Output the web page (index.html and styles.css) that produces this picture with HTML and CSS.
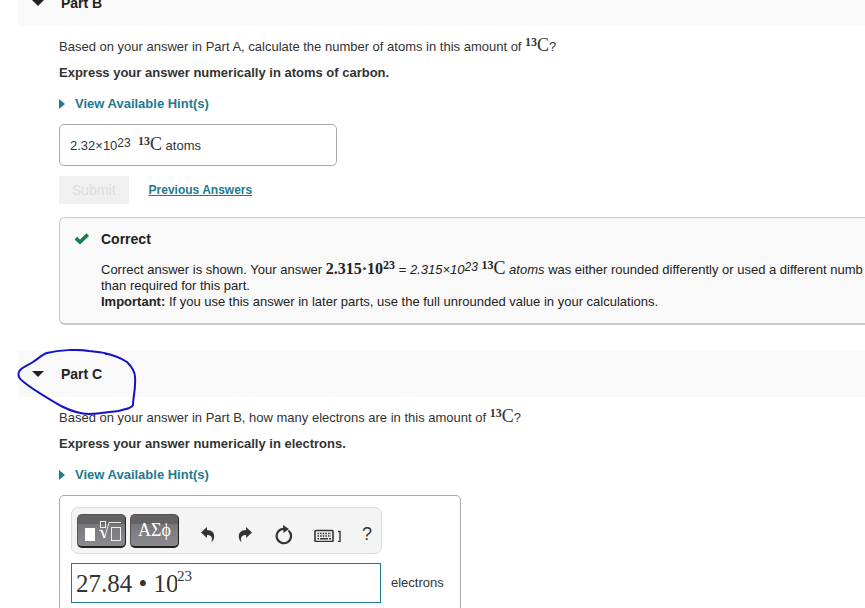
FILE: index.html
```html
<!DOCTYPE html>
<html lang="en">
<head>
    <meta charset="UTF-8">
    <title>Part C</title>
    <link rel="stylesheet" href="styles.css">
</head>
<body>
    <main class="assignment">

        <section class="part">
            <h2 class="part-header">
                <span class="arrow-down"></span>
                Part B
            </h2>
            <div class="part-body">
                <p>Based on your answer in Part A, calculate the number of atoms in this amount of <span class="math"><sup>13</sup>C</span>?</p>
                <p class="instructions">Express your answer numerically in atoms of carbon.</p>
                <a class="hints" href="#hintsB"><span class="arrow-right"></span>View Available Hint(s)</a>

                <div class="answer">2.32×10<sup>23</sup> &nbsp;<span class="math"><sup>13</sup>C</span> atoms</div>

                <div class="actions">
                    <button class="submit" type="button" disabled>Submit</button>
                    <a class="previous" href="#previous">Previous Answers</a>
                </div>

                <div class="feedback">
                    <svg class="check" width="16" height="14" viewBox="0 0 16 14">
                        <path d="M1.800 6.200 L6 10 L13.800 2.600" fill="none" stroke="#12824c" stroke-width="3.600"/>
                    </svg>
                    <div>
                        <h3>Correct</h3>
                        <p>Correct answer is shown. Your answer <span class="math strong">2.315·10<sup>23</sup></span> = <i>2.315×10<sup>23</sup></i> <span class="math"><sup>13</sup>C</span> <i>atoms</i> was either rounded differently or used a different numb<br>
                        than required for this part.<br>
                        <b>Important:</b> If you use this answer in later parts, use the full unrounded value in your calculations.</p>
                    </div>
                </div>
            </div>
        </section>

        <section class="part">
            <h2 class="part-header">
                <span class="arrow-down"></span>
                Part C
                <svg class="pen-circle" width="122" height="68" viewBox="0 0 122 68">
                    <path d="M89 5 C88 3 80 3 72 2 C60 0 42 1 30 4 C26 5 22 9 16 13 C10 17 3 19 2 23 C0 28 4 31 8 34 C18 42 32 50 44 57 C54 62 62 65 72 65 C82 65 92 63 101 62 C109 60 115 59 116 56 C116 48 119 40 118 28 C118 22 113 16 110 13 C104 9 96 6 87 4" fill="none" stroke="#1512c4" stroke-width="2" stroke-linecap="round" stroke-linejoin="round"/>
                </svg>
            </h2>
            <div class="part-body">
                <p>Based on your answer in Part B, how many electrons are in this amount of <span class="math"><sup>13</sup>C</span>?</p>
                <p class="instructions">Express your answer numerically in electrons.</p>
                <a class="hints" href="#hintsC"><span class="arrow-right"></span>View Available Hint(s)</a>

                <form class="editor">
                    <div class="toolbar">
                        <button class="palette" type="button" aria-label="Templates">
                            <svg width="40" height="26" viewBox="0 0 40 26">
                                <rect x="3" y="11" width="10" height="13" fill="#fff"/>
                                <g fill="none" stroke="#eee" stroke-width="1">
                                    <rect x="18.500" y="4.500" width="5" height="6"/>
                                    <path d="M17 14 L19.500 13 L22.500 21 L27 5.500 H39"/>
                                    <rect x="29.500" y="10.500" width="9" height="13"/>
                                </g>
                                <path d="M19.500 13 L22.500 21" stroke="#fff" stroke-width="2"/>
                            </svg>
                        </button>
                        <button class="palette" type="button">ΑΣϕ</button>
                        <div class="tools">
                            <button class="tool" type="button" aria-label="Undo">
                                <svg width="16" height="18" viewBox="0 0 16 18">
                                    <path d="M1 6.500 L7 1 V4 C12 4 15 7 14 12 C13.600 14 12.500 15.500 11.500 16 C13 11 11 9 7 9 V12 Z" fill="#333"/>
                                </svg>
                            </button>
                            <button class="tool" type="button" aria-label="Redo">
                                <svg width="16" height="18" viewBox="0 0 16 18">
                                    <path d="M15 6.500 L9 1 V4 C4 4 1 7 2 12 C2.400 14 3.500 15.500 4.500 16 C3 11 5 9 9 9 V12 Z" fill="#333"/>
                                </svg>
                            </button>
                            <button class="tool" type="button" aria-label="Reset">
                                <svg width="20" height="20" viewBox="-2 0 20 20">
                                    <path d="M13.500 5.500 A7.200 7.200 0 1 1 9 3.800" fill="none" stroke="#333" stroke-width="2.200"/>
                                    <path d="M8 0 L14 4 L8.500 8 Z" fill="#333"/>
                                </svg>
                            </button>
                            <button class="tool" type="button" aria-label="Keyboard shortcuts">
                                <svg width="27" height="14" viewBox="0 -1 27 14">
                                    <rect x="1" y="1.500" width="18" height="11" rx="1" fill="none" stroke="#333" stroke-width="1.600"/>
                                    <path d="M3.500 4.500 H17 M3.500 7 H17" stroke="#333" stroke-width="1.400" stroke-dasharray="1.600 1"/>
                                    <path d="M3.500 9.800 H5 M6 9.800 H14 M15 9.800 H17" stroke="#333" stroke-width="1.400"/>
                                    <path d="M24 2.500 H26 V12.500 H24" fill="none" stroke="#333" stroke-width="1.400"/>
                                </svg>
                            </button>
                            <button class="tool help" type="button">?</button>
                        </div>
                    </div>
                    <div class="entry">
                        <div class="formula">
                            <input class="base" type="text" value="27.84 • 10" aria-labelledby="units">
                            <input class="exponent" type="text" value="23" aria-label="Exponent">
                        </div>
                        <span id="units">electrons</span>
                    </div>
                </form>
            </div>
        </section>

    </main>
</body>
</html>
```

FILE: styles.css
```css
body {
  margin: 0;
  overflow: hidden;
  background-color: #fff;
  color: #333;
  font-family: "Liberation Sans", Arial, sans-serif;
  font-size: 13px;
  line-height: 20px;
}

/* scrolled down a little, the first header is partly cut */
.assignment {
  margin-top: -20px;
  padding-left: 18px;
}

.part {
  margin-bottom: 26px;
}

.part-header {
  position: relative;
  display: flex;
  align-items: center;
  gap: 17px;
  height: 46px;
  margin: 0;
  padding-left: 14px;
  background-color: #f9f9f9;
  color: #222;
  font-size: 14px;
}

.arrow-down {
  border: 6px solid transparent;
  border-top-color: #222;
  border-bottom: 0;
}

.arrow-right {
  border: 5px solid transparent;
  border-left: 6px solid #1d7a8f;
  border-right: 0;
}

.pen-circle {
  position: absolute;
  top: -2px;
  left: -1px;
}

.part-body {
  padding: 11px 0 0 41px;
}

p {
  margin: 0 0 6px;
}

sup {
  font-size: 12px;
  line-height: 0;
  vertical-align: 3px;
}

.math {
  font-family: "Liberation Serif", "Times New Roman", serif;
  font-size: 18px;
  line-height: 0;
}

.math sup {
  font-size: 12px;
  font-weight: bold;
  vertical-align: 5px;
}

.strong {
  font-size: 16px;
  font-weight: bold;
}

.instructions {
  margin-bottom: 11px;
  font-weight: bold;
}

.hints {
  display: flex;
  align-items: center;
  gap: 10px;
  color: #1d7a8f;
  font-weight: bold;
  text-decoration: none;
}

.answer {
  box-sizing: border-box;
  width: 278px;
  margin-top: 10px;
  padding: 11px 10px 9px;
  border: 1px solid #aaa;
  border-radius: 5px;
}

.actions {
  display: flex;
  align-items: center;
  gap: 20px;
  margin: 10px 0 13px;
}

.submit {
  height: 28px;
  padding: 0 13px;
  border: none;
  background-color: #f0f0f0;
  color: #ddd;
  font-family: inherit;
  font-size: 14px;
}

.previous {
  color: #1d7a8f;
  font-size: 12px;
  font-weight: bold;
}

/* the long line runs on past the window */
.feedback {
  display: flex;
  gap: 11px;
  width: max-content;
  min-width: 100%;
  box-sizing: border-box;
  padding: 11px 14px 13px;
  border: 1px solid #c8c8c8;
  border-bottom-width: 2px;
  border-right: 0;
  border-radius: 6px 0 0 6px;
  background-color: #f9f9f9;
  color: #222;
}

.check {
  margin-top: 3px;
}

.feedback h3 {
  margin: 0 0 13px;
  font-size: 14px;
}

.feedback p {
  margin: 0;
  line-height: 16px;
}

.editor {
  width: 378px;
  margin-top: 10px;
  padding: 11px;
  border: 1px solid #aaa;
  border-radius: 5px;
}

.toolbar {
  display: flex;
  align-items: center;
  gap: 4px;
  width: 299px;
  height: 45px;
  padding: 0 5px;
  border: 1px solid #ddd;
  border-radius: 7px;
  background-color: #f4f4f4;
}

.palette {
  width: 49px;
  height: 34px;
  padding: 0;
  border: 1px solid #555;
  border-right-color: #222;
  border-bottom: 2px solid #222;
  border-radius: 5px;
  background: linear-gradient(#636363 30%, #77777b 30%, #8b8b8f);
  color: #fff;
  font-family: "Liberation Serif", "Times New Roman", serif;
  font-size: 18px;
}

.palette svg {
  display: block;
  margin: auto;
}

.tools {
  display: flex;
  flex: 1;
  align-items: center;
  justify-content: space-between;
  padding: 8px 4px 0 17px;
}

.tool {
  padding: 0;
  border: none;
  background: none;
  color: #333;
}

.tool svg {
  display: block;
}

.help {
  font-family: inherit;
  font-size: 18px;
}

.entry {
  display: flex;
  align-items: center;
  gap: 10px;
  margin-top: 9px;
}

.formula {
  display: flex;
  align-items: flex-start;
  width: 304px;
  height: 38px;
  padding-left: 4px;
  border: 1px solid #1d7a8f;
}

.formula input {
  padding: 0;
  border: none;
  outline: none;
  background: none;
  color: #333;
  font-family: "Liberation Serif", "Times New Roman", serif;
}

.base {
  width: 101px;
  height: 40px;
  font-size: 25px;
}

.exponent {
  flex: 1;
  height: 24px;
  font-size: 15px;
}
```
